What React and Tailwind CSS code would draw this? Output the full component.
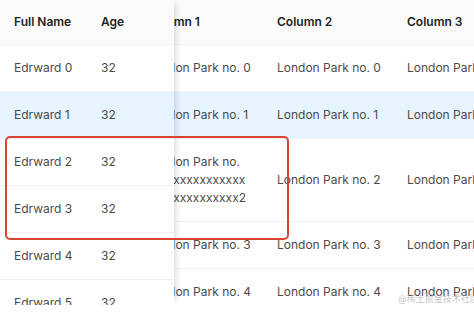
import React from 'react';

const FONT = { fontFamily: 'Inter, "Noto Sans CJK SC", sans-serif' };

const leftRows = [0, 1, 2, 3, 4, 5].map(i => ({ name: `Edrward ${i}`, age: 32 }));
const rightRows = [0, 1, 2, 3, 4].map(i => ({
  c1: i === 2 ? 'London Park no. ' + 'x'.repeat(29) + '2' : `London Park no. ${i}`,
  c2: `London Park no. ${i}`,
  c3: `London Park no. ${i}`
}));

export default function App() {
  return (
    <div className="w-[474px] h-[313px] bg-white overflow-hidden" style={FONT}>
      <div className="relative h-[305px] overflow-hidden flex text-[12px] leading-[18px]">
        {/* fixed columns */}
        <div className="relative z-10 w-[174px] shrink-0 bg-white shadow-[6px_0_6px_-4px_rgba(0,0,0,0.14)]">
          <div className="flex bg-[#fafafa] border-b border-[#f0f0f0] font-semibold text-[#1f1f1f] whitespace-nowrap">
            <div className="w-[87px] px-[14px] py-[13px]">Full Name</div>
            <div className="w-[87px] px-[14px] py-[13px]">Age</div>
          </div>
          {leftRows.map((r, i) => (
            <div
              key={r.name}
              className={`flex border-b border-[#f0f0f0] text-[#4a4a4a] whitespace-nowrap ${i === 1 ? 'bg-[#e6f4ff]' : 'bg-white'}`}
            >
              <div className="w-[87px] px-[14px] py-[14px]">{r.name}</div>
              <div className="w-[87px] px-[14px] py-[14px]">{r.age}</div>
            </div>
          ))}
        </div>

        {/* scrolled columns */}
        <div className="flex-1 overflow-hidden">
          <div className="-ml-[41px] w-[390px]">
            <div className="flex bg-[#fafafa] border-b border-[#f0f0f0] font-semibold text-[#1f1f1f] whitespace-nowrap">
              <div className="w-[130px] shrink-0 px-[14px] py-[13px]">Column 1</div>
              <div className="w-[130px] shrink-0 px-[14px] py-[13px]">Column 2</div>
              <div className="w-[130px] shrink-0 px-[14px] py-[13px]">Column 3</div>
            </div>
            {rightRows.map((r, i) => (
              <div
                key={i}
                className={`flex items-center border-b border-[#f0f0f0] text-[#4a4a4a] ${i === 1 ? 'bg-[#e6f4ff]' : 'bg-white'}`}
              >
                <div className={`w-[130px] shrink-0 px-[14px] py-[14px] ${i === 2 ? '[overflow-wrap:break-word]' : 'whitespace-nowrap'}`}>{r.c1}</div>
                <div className="w-[130px] shrink-0 px-[14px] py-[14px] whitespace-nowrap">{r.c2}</div>
                <div className="w-[130px] shrink-0 px-[14px] py-[14px] whitespace-nowrap">{r.c3}</div>
              </div>
            ))}
          </div>
        </div>

        {/* annotation */}
        <div className="absolute z-20 left-[5px] top-[136px] w-[284px] h-[104px] border-2 border-[#d9452f] rounded-[5px]" />
        <div className="absolute z-20 left-[398px] top-[293px] text-[9px] leading-[12px] text-[#b8b8b8]/80 whitespace-nowrap">@稀土掘金技术社区</div>
      </div>
    </div>
  );
}
